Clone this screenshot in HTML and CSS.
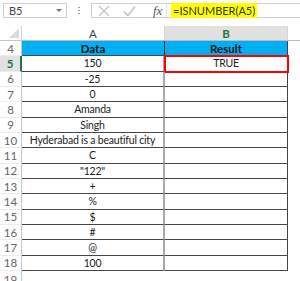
FILE: index.html
```html
<!DOCTYPE html>
<html lang="en">
<head>
    <meta charset="UTF-8">
    <title>ISNUMBER example</title>
    <link rel="stylesheet" href="styles.css">
</head>
<body>

    <div class="excel">
        <!-- Formula bar -->
        <div class="formula-bar">
            <div class="name-box">
                <span>B5</span>
                <span class="caret"></span>
            </div>
            <div class="grip"></div>
            <div class="formula">
                <div class="fx-buttons">
                    <svg width="12" height="12" viewBox="0 0 12 12"><path d="M1 1 L11 11 M11 1 L1 11" stroke="#c4c4c4" stroke-width="1.3" fill="none"/></svg>
                    <svg width="13" height="12" viewBox="0 0 13 12"><path d="M1 6.5 L5 10.5 L12 1.5" stroke="#c4c4c4" stroke-width="1.6" fill="none"/></svg>
                    <span class="fx">fx</span>
                </div>
                <div class="formula-text"><span class="highlight">=ISNUMBER(A5)</span></div>
            </div>
        </div>

        <!-- Sheet -->
        <div class="sheet">
            <div class="corner"><span class="triangle"></span></div>
            <div class="col-head">A</div>
            <div class="col-head active">B</div>
            <div class="col-head filler"></div>

            <div class="row-head">4</div>
            <div class="cell a title">Data</div>
            <div class="cell b title">Result</div>
            <div></div>

            <div class="row-head active">5</div>
            <div class="cell a">150</div>
            <div class="cell b selected">TRUE</div>
            <div></div>

            <div class="row-head">6</div>
            <div class="cell a">-25</div>
            <div class="cell b"></div>
            <div></div>

            <div class="row-head">7</div>
            <div class="cell a">0</div>
            <div class="cell b"></div>
            <div></div>

            <div class="row-head">8</div>
            <div class="cell a">Amanda</div>
            <div class="cell b"></div>
            <div></div>

            <div class="row-head">9</div>
            <div class="cell a">Singh</div>
            <div class="cell b"></div>
            <div></div>

            <div class="row-head">10</div>
            <div class="cell a">Hyderabad is a beautiful city</div>
            <div class="cell b"></div>
            <div></div>

            <div class="row-head">11</div>
            <div class="cell a">C</div>
            <div class="cell b"></div>
            <div></div>

            <div class="row-head">12</div>
            <div class="cell a">"122"</div>
            <div class="cell b"></div>
            <div></div>

            <div class="row-head">13</div>
            <div class="cell a">+</div>
            <div class="cell b"></div>
            <div></div>

            <div class="row-head">14</div>
            <div class="cell a">%</div>
            <div class="cell b"></div>
            <div></div>

            <div class="row-head">15</div>
            <div class="cell a">$</div>
            <div class="cell b"></div>
            <div></div>

            <div class="row-head">16</div>
            <div class="cell a">#</div>
            <div class="cell b"></div>
            <div></div>

            <div class="row-head">17</div>
            <div class="cell a">@</div>
            <div class="cell b"></div>
            <div></div>

            <div class="row-head">18</div>
            <div class="cell a">100</div>
            <div class="cell b"></div>
            <div></div>

            <div class="row-head last">19</div>
        </div>
    </div>

</body>
</html>
```

FILE: styles.css
```css
body {
    margin: 0;
    padding: 0;
    background-color: #fff;
    font-family: Lato, "Open Sans", sans-serif;
    overflow: hidden;
}

.excel {
    width: 300px;
    height: 281px;
    overflow: hidden;
}

/* Formula bar */
.formula-bar {
    display: flex;
    align-items: flex-start;
    height: 26px;
    padding-top: 3px;
    box-sizing: border-box;
}

.name-box {
    display: flex;
    align-items: center;
    justify-content: space-between;
    margin-left: 3px;
    width: 64px;
    height: 15px;
    padding: 0 4px 0 5px;
    box-sizing: border-box;
    border: 1px solid #d0d0d0;
    font-size: 11px;
    color: #444;
}

.caret {
    width: 0;
    height: 0;
    border-left: 3px solid transparent;
    border-right: 3px solid transparent;
    border-top: 3px solid #777;
}

.grip {
    width: 2px;
    height: 9px;
    margin: 3px 11px 0 11px;
    background-image: radial-gradient(circle, #a0a0a0 0.8px, transparent 1px);
    background-size: 2px 3px;
}

.formula {
    display: flex;
    flex: 1;
    height: 15px;
    border: 1px solid #d0d0d0;
    border-right: none;
    box-sizing: border-box;
}

.fx-buttons {
    display: flex;
    align-items: center;
    width: 75px;
    padding-left: 6px;
    box-sizing: border-box;
    gap: 13px;
    border-right: 1px solid #e2e2e2;
}

.fx {
    margin-left: 4px;
    font-family: "Liberation Serif", serif;
    font-style: italic;
    font-size: 13px;
    color: #555;
}

.formula-text {
    display: flex;
    align-items: center;
    padding-left: 4px;
}

.highlight {
    background-color: #ffff00;
    padding: 1px 2px;
    font-size: 11px;
    color: #333;
}

/* Sheet grid */
.sheet {
    display: grid;
    grid-template-columns: 22px 143px 123px 12px;
    grid-template-rows: 15px;
    grid-auto-rows: 15.333px;
    font-size: 10.5px;
    letter-spacing: -0.2px;
    color: #222;
}

.corner {
    position: relative;
    border-right: 1px solid #d4d4d4;
    border-bottom: 1px solid #c6c6c6;
}

.corner .triangle {
    position: absolute;
    right: 2px;
    bottom: 2px;
    width: 0;
    height: 0;
    border-left: 10px solid transparent;
    border-bottom: 10px solid #dcdcdc;
}

.col-head {
    display: flex;
    align-items: center;
    justify-content: center;
    font-size: 11.5px;
    letter-spacing: 0;
    color: #444;
    background-color: #fff;
    border-right: 1px solid #d4d4d4;
    border-bottom: 1px solid #bcbcbc;
    box-sizing: border-box;
}

.col-head.active {
    background-color: #e1e1e1;
    color: #217346;
    font-weight: bold;
}

.col-head.filler {
    border-right: none;
}

.row-head {
    display: flex;
    align-items: center;
    justify-content: center;
    font-size: 11.5px;
    letter-spacing: 0;
    color: #666;
    border-right: 1px solid #c6c6c6;
    border-bottom: 1px solid #ececec;
    box-sizing: border-box;
}

.row-head.active {
    color: #217346;
    font-weight: bold;
    border-right: 2px solid #217346;
    background-color: #e1e1e1;
}

.row-head.last {
    border-bottom: none;
    align-items: flex-start;
    padding-top: 2px;
}

.cell {
    display: flex;
    align-items: center;
    justify-content: center;
    white-space: nowrap;
    border-bottom: 1px solid #474747;
    box-sizing: border-box;
}

.cell.a {
    border-right: 2px solid #a8a8a8;
}

.cell.b {
    border-right: 1px solid #444;
}

.cell.title {
    background-color: #00b0f0;
    font-weight: bold;
    font-size: 11.5px;
    letter-spacing: 0;
    color: #111;
}

.cell.a.title {
    border-right: 1px solid #222;
}

.cell.selected {
    outline: 2px solid #ff0000;
    outline-offset: -1px;
}
```
